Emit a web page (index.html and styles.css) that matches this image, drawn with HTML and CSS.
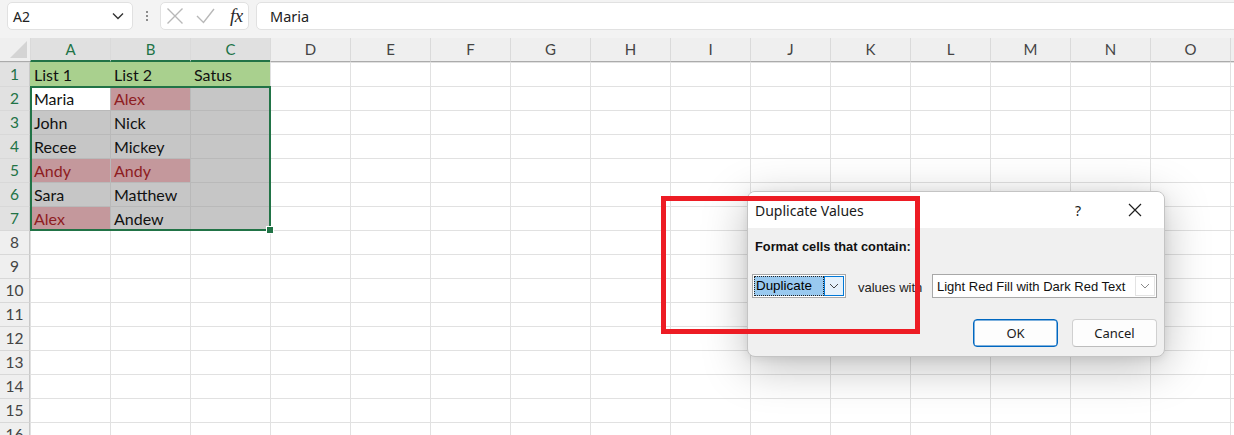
FILE: index.html
```html
<!DOCTYPE html>
<html>
<head>
<meta charset="utf-8">
<link rel="stylesheet" href="styles.css">
</head>
<body>
<div class="app">
  <div class="fbar">
    <div class="namebox"><span>A2</span>
      <svg class="chev" width="12" height="8" viewBox="0 0 12 8"><polyline points="1,1.5 6,6.5 11,1.5" fill="none" stroke="#333" stroke-width="1.4"/></svg>
    </div>
    <div class="dots"><i></i><i></i><i></i></div>
    <div class="fxbox">
      <svg width="18" height="18" viewBox="0 0 18 18"><path d="M1.5 1.5 L16.5 16.5 M16.5 1.5 L1.5 16.5" stroke="#b8b8b8" stroke-width="1.4" fill="none"/></svg>
      <svg class="chk" width="19" height="16" viewBox="0 0 19 16"><polyline points="1,8 7.5,14.5 18,1" fill="none" stroke="#b8b8b8" stroke-width="1.4"/></svg>
      <span class="fx">fx</span>
    </div>
    <div class="finput">Maria</div>
  </div>

  <div class="colhdrs">
    <div class="corner"><div class="tri"></div></div>
    <div class="ch sel">A</div>
    <div class="ch sel">B</div>
    <div class="ch sel">C</div>
    <div class="ch">D</div>
    <div class="ch">E</div>
    <div class="ch">F</div>
    <div class="ch">G</div>
    <div class="ch">H</div>
    <div class="ch">I</div>
    <div class="ch">J</div>
    <div class="ch">K</div>
    <div class="ch">L</div>
    <div class="ch">M</div>
    <div class="ch">N</div>
    <div class="ch">O</div>
    <div class="ch last"></div>
  </div>

  <div class="sheetbody">
    <div class="rowhdrs">
      <div class="rh sel">1</div>
      <div class="rh sel">2</div>
      <div class="rh sel">3</div>
      <div class="rh sel">4</div>
      <div class="rh sel">5</div>
      <div class="rh sel">6</div>
      <div class="rh sel">7</div>
      <div class="rh">8</div>
      <div class="rh">9</div>
      <div class="rh">10</div>
      <div class="rh">11</div>
      <div class="rh">12</div>
      <div class="rh">13</div>
      <div class="rh">14</div>
      <div class="rh">15</div>
      <div class="rh">16</div>
    </div>
    <div class="cells">
      <div class="data">
        <div class="c hd">List 1</div><div class="c hd">List 2</div><div class="c hd">Satus</div>
        <div class="c act">Maria</div><div class="c dup">Alex</div><div class="c"></div>
        <div class="c">John</div><div class="c">Nick</div><div class="c"></div>
        <div class="c">Recee</div><div class="c">Mickey</div><div class="c"></div>
        <div class="c dup">Andy</div><div class="c dup">Andy</div><div class="c"></div>
        <div class="c">Sara</div><div class="c">Matthew</div><div class="c"></div>
        <div class="c dup">Alex</div><div class="c">Andew</div><div class="c"></div>
      </div>
      <div class="selection"><div class="handle"></div></div>
    </div>
  </div>

  <div class="dialog">
    <div class="dlg-title">
      <span class="ttl">Duplicate Values</span>
      <span class="help">?</span>
      <span class="close"><svg width="14" height="14" viewBox="0 0 14 14"><path d="M1 1 L13 13 M13 1 L1 13" stroke="#1f1f1f" stroke-width="1.2" fill="none"/></svg></span>
    </div>
    <div class="dlg-body">
      <div class="lbl">Format cells that contain:</div>
      <div class="ctrlrow">
        <div class="combo1">
          <span class="seltxt">Duplicate</span>
          <span class="btn1"><svg width="10" height="6" viewBox="0 0 10 6"><polyline points="1,1 5,5 9,1" fill="none" stroke="#444" stroke-width="1"/></svg></span>
        </div>
        <span class="lbl2">values with</span>
        <div class="combo2">
          <span class="txt2">Light Red Fill with Dark Red Text</span>
          <span class="btn2"><svg width="10" height="6" viewBox="0 0 10 6"><polyline points="1,1 5,5 9,1" fill="none" stroke="#8a8a8a" stroke-width="1"/></svg></span>
        </div>
      </div>
      <div class="btnrow">
        <div class="pbtn ok">OK</div>
        <div class="pbtn">Cancel</div>
      </div>
    </div>
  </div>

  <div class="redbox"></div>
</div>
</body>
</html>
```

FILE: styles.css
```css
html, body {
  margin: 0;
  padding: 0;
  background: #ffffff;
}

body {
  width: 1234px;
  height: 435px;
  overflow: hidden;
  font-family: Lato, "Liberation Sans", sans-serif;
}

.app {
  position: relative;
  width: 1234px;
  height: 435px;
  overflow: hidden;
  background: #ffffff;
}

/* formula bar */
.fbar {
  height: 38px;
  box-sizing: border-box;
  background: #f3f3f3;
  display: flex;
  align-items: flex-start;
  padding: 2px 0 0 7px;
}

.namebox {
  width: 126px;
  height: 28px;
  box-sizing: border-box;
  background: #ffffff;
  border: 1px solid #e1e1e1;
  border-radius: 5px;
  display: flex;
  align-items: center;
  justify-content: space-between;
  padding: 0 8px 0 5px;
  font: 14px "Noto Sans", "Open Sans", sans-serif;
  color: #222;
}

.dots {
  width: 27px;
  height: 28px;
  box-sizing: border-box;
  display: flex;
  flex-direction: column;
  align-items: center;
  gap: 2px;
  padding-top: 9px;
}

.dots i {
  display: block;
  width: 2px;
  height: 2px;
  background: #8c8c8c;
}

.fxbox {
  width: 89px;
  height: 28px;
  box-sizing: border-box;
  background: #ffffff;
  border: 1px solid #e1e1e1;
  border-radius: 5px;
  display: flex;
  align-items: center;
  padding-left: 5px;
}

.fxbox .chk {
  margin-left: 12px;
}

.fx {
  margin-left: 15px;
  font: italic 19px "Liberation Serif", serif;
  color: #2b2b2b;
  letter-spacing: -0.5px;
}

.finput {
  flex: 1;
  margin-left: 7px;
  margin-right: -10px;
  height: 28px;
  box-sizing: border-box;
  background: #ffffff;
  border: 1px solid #e1e1e1;
  border-radius: 5px;
  padding-left: 13px;
  font: 14.5px "Noto Sans", "Open Sans", sans-serif;
  line-height: 26px;
  color: #222;
}

/* column headers */
.colhdrs {
  display: flex;
  height: 24px;
  background: #efefef;
}

.corner {
  width: 30px;
  flex: none;
  box-sizing: border-box;
  border-bottom: 1px solid #ababab;
  display: flex;
  align-items: flex-end;
  justify-content: flex-end;
  padding: 0 3px 3px 0;
}

.tri {
  width: 17px;
  height: 17px;
  background: #d4d4d4;
  clip-path: polygon(100% 0, 100% 100%, 0 100%);
}

.ch {
  width: 80px;
  flex: none;
  box-sizing: border-box;
  border-left: 1px solid #dadada;
  border-bottom: 1px solid #ababab;
  text-align: center;
  font-size: 15px;
  line-height: 23px;
  color: #444444;
}

.ch.sel {
  background: #e0e0e0;
  color: #217346;
  border-bottom: 2px solid #217346;
  line-height: 22px;
}

.ch.last {
  flex: 1;
}

/* sheet body */
.sheetbody {
  display: flex;
  height: 373px;
}

.rowhdrs {
  width: 30px;
  flex: none;
  display: flex;
  flex-direction: column;
  background: #efefef;
}

.rh {
  height: 24px;
  flex: none;
  box-sizing: border-box;
  border-top: 1px solid #d8d8d8;
  border-right: 1px solid #c9c9c9;
  text-align: center;
  font-size: 15.5px;
  line-height: 23px;
  color: #444444;
}

.rh.sel {
  background: #e1e1e1;
  color: #217346;
}

.cells {
  flex: 1;
  position: relative;
  background-color: #ffffff;
  background-image:
    linear-gradient(to right, #e1e1e1 1px, transparent 1px),
    linear-gradient(to bottom, #e1e1e1 1px, transparent 1px);
  background-size: 80px 24px;
}

.data {
  display: grid;
  grid-template-columns: repeat(3, 80px);
  grid-auto-rows: 24px;
  width: 240px;
}

.c {
  box-sizing: border-box;
  border-left: 1px solid #b9b9b9;
  border-top: 1px solid #b9b9b9;
  background: #c6c6c6;
  padding: 1px 0 0 3px;
  font-size: 16px;
  line-height: 22px;
  color: #111111;
  white-space: nowrap;
  overflow: hidden;
}

.c.hd {
  background: #a9d08e;
  border-color: #a9d08e;
}

.c.dup {
  background: #c4989c;
  color: #8e1c22;
}

.c.act {
  background: #ffffff;
}

.selection {
  position: absolute;
  left: 0;
  top: 24px;
  width: 241px;
  height: 145px;
  box-sizing: border-box;
  border: 2px solid #217346;
}

.handle {
  position: absolute;
  right: -5px;
  bottom: -5px;
  width: 6px;
  height: 6px;
  background: #217346;
  border: 1px solid #ffffff;
}

/* dialog */
.dialog {
  position: absolute;
  left: 747px;
  top: 191px;
  width: 418px;
  height: 166px;
  box-sizing: border-box;
  background: #f0f0f0;
  border: 1px solid #c4c4c4;
  border-radius: 8px;
  overflow: hidden;
  box-shadow: 0 10px 45px rgba(0, 0, 0, 0.26), 0 2px 8px rgba(0, 0, 0, 0.08);
  font-family: "Liberation Sans", Arial, sans-serif;
  font-size: 13px;
  color: #1a1a1a;
}

.dlg-title {
  height: 36px;
  background: #ffffff;
  display: flex;
  align-items: center;
  padding: 0 14px 0 7px;
  font: 14px "Noto Sans", "Open Sans", sans-serif;
  color: #1a1a1a;
}

.ttl {
  flex: 1;
}

.help {
  width: 30px;
  text-align: center;
  margin-right: 27px;
  font-size: 14px;
}

.close {
  width: 30px;
  display: flex;
  justify-content: center;
}

.dlg-body {
  padding: 12px 7px 0 7px;
}

.lbl {
  font-weight: bold;
  font-size: 12.8px;
  line-height: 14px;
  color: #111;
}

.ctrlrow {
  display: flex;
  align-items: center;
  height: 24px;
  margin-top: 20px;
}

.combo1 {
  width: 94px;
  height: 24px;
  margin-left: -3px;
  box-sizing: border-box;
  border: 1px solid #a8a8a8;
  background: #ffffff;
  padding: 1px;
  display: flex;
}

.seltxt {
  flex: 1;
  background: #99c9ef;
  outline: 1px dotted #222;
  outline-offset: -1px;
  padding-left: 2px;
  line-height: 20px;
  font-size: 13.4px;
  color: #000;
}

.btn1 {
  width: 20px;
  box-sizing: border-box;
  background: #e5f1fb;
  border: 1px solid #0078d7;
  display: flex;
  align-items: center;
  justify-content: center;
}

.lbl2 {
  margin-left: 12px;
  width: 74px;
  white-space: nowrap;
  color: #222;
  padding-top: 2px;
}

.combo2 {
  width: 225px;
  height: 24px;
  box-sizing: border-box;
  border: 1px solid #a8a8a8;
  background: #ffffff;
  display: flex;
  align-items: center;
  padding: 1px;
}

.txt2 {
  flex: 1;
  padding-left: 3px;
  color: #111;
}

.btn2 {
  width: 20px;
  height: 20px;
  box-sizing: border-box;
  border: 1px solid #e3e3e3;
  display: flex;
  align-items: center;
  justify-content: center;
}

.btnrow {
  display: flex;
  justify-content: flex-end;
  gap: 14px;
  margin-top: 21px;
}

.pbtn {
  width: 85px;
  height: 28px;
  box-sizing: border-box;
  border: 1px solid #d0d0d0;
  border-bottom-color: #bdbdbd;
  border-radius: 4px;
  background: #fdfdfd;
  text-align: center;
  font: 13px "Noto Sans", "Open Sans", sans-serif;
  line-height: 26px;
  color: #1a1a1a;
}

.pbtn.ok {
  border: 1px solid #0067c0;
  box-shadow: inset 0 0 0 0.5px #0067c0;
}

.redbox {
  position: absolute;
  left: 661px;
  top: 196px;
  width: 259px;
  height: 138px;
  box-sizing: border-box;
  border: 5px solid #ed1c24;
}
```
